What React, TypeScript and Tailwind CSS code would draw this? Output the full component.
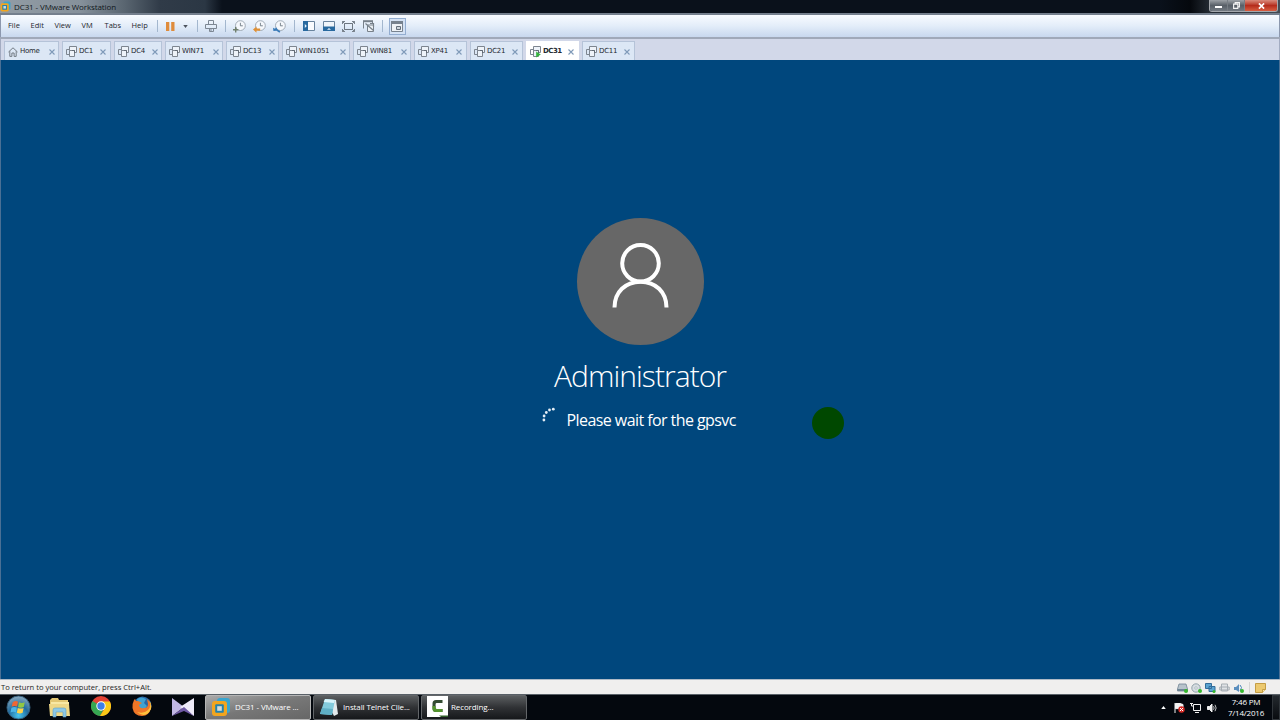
import type { ReactNode } from "react";

type Tab = { name: string; cell: string; label: string; active?: boolean };

const tabs: Tab[] = [
	{ name: "DC1", cell: "w-[52px]", label: "w-[21px]" },
	{ name: "DC4", cell: "w-[51px]", label: "w-[21px]" },
	{ name: "WIN71", cell: "w-[61px]", label: "w-[31px]" },
	{ name: "DC13", cell: "w-[56px]", label: "w-[26px]" },
	{ name: "WIN1051", cell: "w-[71px]", label: "w-[41px]" },
	{ name: "WIN81", cell: "w-[61px]", label: "w-[31px]" },
	{ name: "XP41", cell: "w-[56px]", label: "w-[25px]" },
	{ name: "DC21", cell: "w-[56px]", label: "w-[25px]" },
	{ name: "DC31", cell: "w-[56px]", label: "w-[25px]", active: true },
	{ name: "DC11", cell: "w-[56px]", label: "w-[25px]" },
];

const menus = [
	{ name: "File", w: "w-[22.5px]" },
	{ name: "Edit", w: "w-[24px]" },
	{ name: "View", w: "w-[27px]" },
	{ name: "VM", w: "w-[23px]" },
	{ name: "Tabs", w: "w-[27px]" },
	{ name: "Help", w: "w-[25px]" },
];

function VmLogo({ className = "" }: { className?: string }) {
	return (
		<svg viewBox="0 0 20 20" className={className}>
			<rect x="6" y="1" width="13" height="15" rx="3" fill="#3aa5ce" />
			<rect x="1" y="4" width="15" height="15" rx="3" fill="#f2a51e" />
			<rect x="4.2" y="7.2" width="8.6" height="8.6" rx="1" fill="#2383ad" />
			<rect x="6.2" y="9.2" width="4.6" height="4.6" fill="#d8dcd8" />
		</svg>
	);
}

function VmIcon({ active = false }: { active?: boolean }) {
	return (
		<svg viewBox="0 0 12 12" className="h-3 w-3 shrink-0" fill="none" stroke="#7d858f">
			<path d="M3.5 8.5h-3v-5h3" />
			<path d="M3.5.5h7v6h-7z" fill="#eef3f9" />
			<path d="M3.5 4.5h5v6h-5z" fill="#eef3f9" />
			<path d="M6 4.5h2.5V7" stroke="#626a74" />
			{active && <path d="M6.2 5.6v6l4.6-3z" fill="#35b33c" stroke="none" />}
		</svg>
	);
}

function CloseX() {
	return (
		<svg viewBox="0 0 6 6" className="h-1.5 w-1.5 shrink-0" stroke="#7f9ab8" strokeWidth="1.1">
			<path d="M.5.5l5 5M5.5.5l-5 5" />
		</svg>
	);
}

function Separator() {
	return <div className="h-3 w-px shrink-0 bg-[#a3b7ce]" />;
}

function Cell({ children, className }: { children: ReactNode; className: string }) {
	return <div className={`flex shrink-0 items-center justify-center ${className}`}>{children}</div>;
}

function Clock({ children }: { children: ReactNode }) {
	return (
		<svg viewBox="0 0 13 13" className="h-[13px] w-[13px] shrink-0" fill="none">
			<circle cx="7.4" cy="5.6" r="4.9" fill="#f5f8fc" stroke="#9aa4af" strokeWidth=".9" />
			<path d="M7.4 2.8v3h2.4" stroke="#6f7a85" strokeWidth=".9" />
			{children}
		</svg>
	);
}

function Toolbar() {
	return (
		<div className="flex h-[22px] shrink-0 items-center border-x border-[#8c98ae] bg-linear-to-b from-[#f8fbff] via-[#e3edf9] to-[#c8d8ee] pl-[7px] font-['Open_Sans',sans-serif] text-[7.5px] text-[#25282e]">
			{menus.map((m) => (
				<span key={m.name} className={`shrink-0 whitespace-nowrap ${m.w}`}>
					{m.name}
				</span>
			))}
			<Separator />
			<Cell className="w-[26px]">
				<svg viewBox="0 0 9 9" className="h-[9px] w-[9px]">
					<path d="M0 0h3.3v9H0zM5.2 0h3.3v9H5.2z" fill="#df8c3c" />
				</svg>
			</Cell>
			<svg viewBox="0 0 6 4" className="-ml-px h-[3px] w-[5px] shrink-0">
				<path d="M0 0h6L3 4z" fill="#4c535d" />
			</svg>
			<div className="w-[9px]" />
			<Separator />
			<Cell className="w-[27px]">
				<svg viewBox="0 0 12 12" className="h-3 w-3" fill="none" stroke="#7c8793" strokeWidth="1">
					<path d="M3.5 4.5v-4h5v4M.5 4.5h11v4H.5zM6 8.5V11M4.5 8.5h4v3h-4z" />
				</svg>
			</Cell>
			<Separator />
			<Cell className="w-[28px]">
				<Clock>
					<path d="M0 9.7h5.4M2.7 7v5.4" stroke="#71806e" strokeWidth="1.4" />
				</Clock>
			</Cell>
			<Cell className="w-[12px]">
				<Clock>
					<path d="M0 9.5l3.5-3v2h3.7v2.2H3.5v2z" fill="#e09035" />
				</Clock>
			</Cell>
			<Cell className="w-[28px]">
				<Clock>
					<path d="M0 7.8l2 1 1.2-1.6 1.4 2.3 2.8 1.7-1 1.5-2.9-1.9L.4 11z" fill="#397bb9" />
				</Clock>
			</Cell>
			<Separator />
			<Cell className="w-[28px]">
				<svg viewBox="0 0 12 10" className="h-[10px] w-3">
					<path d="M.5.5h11v9H.5z" fill="#f9fbfe" stroke="#69839d" />
					<path d="M0 0h5v10H0z" fill="#28699f" />
					<path d="M1.8 3l2 2-2 2z" fill="#e8f5ff" />
				</svg>
			</Cell>
			<Cell className="w-[12px]">
				<svg viewBox="0 0 12 10" className="h-[10px] w-3 shrink-0">
					<path d="M.5.5h11v9H.5z" fill="#f0f5fa" stroke="#69839d" />
					<path d="M0 5.5h12V10H0z" fill="#28699f" />
					<path d="M4 8.8l2-1.7 2 1.7z" fill="#e8f5ff" />
				</svg>
			</Cell>
			<Cell className="w-[28px]">
				<svg viewBox="0 0 13 11" className="h-[11px] w-[13px]" fill="none" stroke="#6d7680">
					<path d="M2.5 2.5h8v6h-8z" />
					<path d="M.5 3V.5H3M10 .5h2.5V3M12.5 8v2.5H10M3 10.5H.5V8M.5.5l2 2M12.5.5l-2 2M.5 10.5l2-2M12.5 10.5l-2-2" strokeWidth=".9" />
				</svg>
			</Cell>
			<Cell className="w-[12px]">
				<svg viewBox="0 0 12 12" className="h-3 w-3 shrink-0" fill="none" stroke="#78818a">
					<path d="M.5 8.5V1.5h9v2" />
					<path d="M0 1.2h10" strokeWidth="2" />
					<path d="M4.5 5h6v6.5h-6z" fill="#eef2f6" />
					<path d="M2.5 3.5l8 7M7 3.5h3.5V7" strokeWidth="1.2" />
				</svg>
			</Cell>
			<div className="w-[7px]" />
			<Separator />
			<div className="w-[6px]" />
			<div className="flex h-[17px] w-[17px] shrink-0 items-center justify-center border border-[#93add0] bg-[#d4e2f4]">
				<svg viewBox="0 0 12 11" className="h-[11px] w-3 shrink-0">
					<path d="M.5.5h11v10H.5z" fill="#eef2f6" stroke="#78838f" />
					<path d="M0 0h12v3H0z" fill="#77828e" />
					<path d="M5.5 5.5h4v3h-4z" fill="#cfd6dd" stroke="#65707c" />
				</svg>
			</div>
		</div>
	);
}

function TabBar() {
	return (
		<div className="flex h-[21px] shrink-0 items-end border-x border-[#a3acc2] bg-[#d2d8e9] pl-[3px] font-['DejaVu_Sans',sans-serif] text-[7px] text-[#24292f]">
			<div className="w-[58px] shrink-0">
				<div className="flex h-[19px] w-[55px] items-center border border-b-0 border-[#b5c3d8] bg-[#dce7f5] pt-px pl-[3px]">
					<svg viewBox="0 0 10 10" className="h-[10px] w-[10px] shrink-0" fill="none" stroke="#737b84">
						<path d="M.5 5L5 .8 9.5 5M1.8 4.2v5.2h2.1V6h2.2v3.4h2.1V4.2" />
					</svg>
					<span className="ml-0.5 w-[29px] whitespace-nowrap tracking-[-0.3px]">Home</span>
					<CloseX />
				</div>
			</div>
			{tabs.map((t) => (
				<div key={t.name} className={`shrink-0 pr-[3px] ${t.cell}`}>
					<div
						className={`flex h-[19px] items-center border border-b-0 pt-px pl-[3px] ${
							t.active ? "border-white bg-white font-bold" : "border-[#b5c3d8] bg-[#dce7f5]"
						}`}
					>
						<VmIcon active={t.active} />
						<span className={`ml-px shrink-0 whitespace-nowrap ${t.label}`}>
							<span className={t.active ? "tracking-[-0.5px]" : "tracking-[-0.25px]"}>{t.name}</span>
						</span>
						<CloseX />
					</div>
				</div>
			))}
		</div>
	);
}

function TitleBar() {
	return (
		<div className="flex h-[13px] shrink-0 justify-between bg-[linear-gradient(90deg,#929ca5_0px,#86919b_80px,#596570_125px,#303b48_160px,#2b3744_205px,#0a111b_222px,#0a111b_1160px,#05080d_1190px,#242b33_1210px,#454c54_1280px)]">
			<div className="flex items-center">
				<VmLogo className="h-[11px] w-[11px]" />
				<span className="ml-[3px] whitespace-nowrap font-['Open_Sans',sans-serif] text-[8px] leading-3 tracking-[-0.1px] text-[#111820]">
					DC31 - VMware Workstation
				</span>
			</div>
			<div className="mr-0.5 flex h-[12px] w-[69px] overflow-hidden rounded-b-[3px] border border-t-0 border-[#a4a8ad]">
				<div className="flex w-[18px] items-center justify-center border-r border-[#777d84] bg-linear-to-b from-[#9da2a7] via-[#596068] to-[#737a82]">
					<div className="mt-[3px] h-[2px] w-[7px] bg-white" />
				</div>
				<div className="flex w-[17px] items-center justify-center border-r border-[#777d84] bg-linear-to-b from-[#9da2a7] via-[#596068] to-[#737a82]">
					<svg viewBox="0 0 8 8" className="h-[7px] w-[7px]" fill="none" stroke="#f5f5f5" strokeWidth="1.3">
						<path d="M2.5 2V.7h4.8v4.8H6M.7 2.5h4.8v4.8H.7z" />
					</svg>
				</div>
				<div className="flex flex-1 items-center justify-center bg-linear-to-b from-[#d98a7c] via-[#b52c1c] to-[#d95d40]">
					<svg viewBox="0 0 8 7" className="h-[6px] w-[7px]" stroke="white" strokeWidth="2">
						<path d="M1 .5l6 6M7 .5l-6 6" />
					</svg>
				</div>
			</div>
		</div>
	);
}

function GuestScreen() {
	return (
		<div className="relative flex h-[619px] shrink-0 flex-col items-center border-x border-[#4a7095] bg-[#00477d] pt-[157px] text-white">
			<svg viewBox="0 0 128 128" className="h-32 w-32 shrink-0" fill="none">
				<circle cx="64.5" cy="64.5" r="63.5" fill="#676767" />
				<circle cx="64.5" cy="46.3" r="18.3" stroke="white" strokeWidth="4" />
				<path d="M38.5 90.5C38.5 75 49.5 64.7 64.5 64.7S90.5 75 90.5 90.5" stroke="white" strokeWidth="4" />
			</svg>
			<div className="mt-[11px] whitespace-nowrap font-['Open_Sans',sans-serif] text-[30px] leading-10 font-light tracking-[-0.95px]">
				Administrator
			</div>
			<div className="mt-[12px] flex h-6 w-[199px] items-center">
				<svg viewBox="0 0 24 24" className="-mt-1 h-6 w-6 shrink-0" fill="#e3edf5">
					<circle cx="2.9" cy="14" r="1.4" />
					<circle cx="3.1" cy="10" r="1.4" />
					<circle cx="5.3" cy="6.5" r="1.4" />
					<circle cx="8.5" cy="4" r="1.4" />
					<circle cx="12.3" cy="3.2" r="1.4" />
				</svg>
				<span className="ml-[2px] whitespace-nowrap font-['Open_Sans',sans-serif] text-[16px] tracking-[-0.57px]">
					Please wait for the gpsvc
				</span>
			</div>
			<div className="absolute top-[347px] left-[811px] h-8 w-8 rounded-full bg-[#004800]" />
		</div>
	);
}

function StatusBar() {
	return (
		<div className="flex h-[15px] shrink-0 items-center justify-between border-t border-[#aebac6] bg-[#f0efee] pt-px pr-[14px] font-['Open_Sans',sans-serif] text-[7.6px] text-[#252525]">
			<span className="ml-px whitespace-nowrap">To return to your computer, press Ctrl+Alt.</span>
			<div className="flex items-center gap-[3px]">
				<svg viewBox="0 0 11 10" className="h-[10px] w-[11px]">
					<path d="M2 1h7l1.5 5v2H.5V6z" fill="#b8c3cb" stroke="#718494" strokeWidth=".8" />
					<path d="M.5 6h10v2H.5z" fill="#6d8595" />
					<circle cx="9" cy="8" r="2" fill="#36b82e" />
				</svg>
				<svg viewBox="0 0 11 10" className="h-[10px] w-[11px]">
					<circle cx="5" cy="5" r="4.2" fill="#d6dde1" stroke="#93a1aa" />
					<circle cx="5" cy="5" r="1.2" fill="white" stroke="#899aa5" strokeWidth=".6" />
					<circle cx="9" cy="8" r="2" fill="#36b82e" />
				</svg>
				<svg viewBox="0 0 11 10" className="h-[10px] w-[11px]">
					<path d="M.5.5h6v5h-6zM4 3.5h6v5H4z" fill="#5ba4d1" stroke="#336c9a" />
					<circle cx="9" cy="8.5" r="1.5" fill="#36b82e" />
				</svg>
				<svg viewBox="0 0 11 10" className="h-[10px] w-[11px]" stroke="#a6adb3">
					<path d="M2.5 1h6v7h-6zM.8 4h9.4v3H.8z" fill="#dfe2e5" />
				</svg>
				<svg viewBox="0 0 11 10" className="h-[10px] w-[11px]">
					<path d="M1 4h2l3-3v8L3 7H1z" fill="#5b8fbe" />
					<path d="M7 2q3 2 0 6" fill="none" stroke="#4b86b9" />
					<circle cx="9" cy="8" r="2" fill="#36b82e" />
				</svg>
				<div className="ml-[2px] h-[11px] w-px bg-[#d5d5d5]" />
				<svg viewBox="0 0 11 10" className="ml-[2px] h-[10px] w-[11px]">
					<path d="M.5.5h10v6l-3 3h-7z" fill="#ecc96f" stroke="#c49d45" />
					<path d="M7.5 9.5v-3h3" fill="#fbe8ac" stroke="#c49d45" />
				</svg>
			</div>
		</div>
	);
}

function TaskButton({ icon, label, active = false }: { icon: ReactNode; label: string; active?: boolean }) {
	return (
		<div
			className={`mr-[2px] flex h-[25px] w-[106px] shrink-0 items-center rounded-[2px] border pb-[2px] pl-[5px] ${
				active
					? "border-[#b5b5b5] bg-linear-to-br from-[#aaa] via-[#777] to-[#676767]"
					: "border-[#636669] bg-linear-to-b from-[#5b5e60] via-[#303235] to-[#16181b]"
			}`}
		>
			<div className="flex w-[24px] shrink-0 items-center">{icon}</div>
			<span className="whitespace-nowrap tracking-[-0.12px]">{label}</span>
		</div>
	);
}

function Taskbar() {
	return (
		<div className="flex h-[26px] shrink-0 items-center border-t border-[#596067] bg-[#04080e] font-['Open_Sans',sans-serif] text-[8px] text-white">
			<Cell className="w-[36px] pb-px">
				<svg viewBox="0 0 26 26" className="h-[25px] w-[25px] shrink-0">
					<defs>
						<radialGradient id="orb" cx=".5" cy=".85" r=".85">
							<stop stopColor="#48c6ef" />
							<stop offset=".5" stopColor="#226c9f" />
							<stop offset="1" stopColor="#8fabbe" />
						</radialGradient>
					</defs>
					<circle cx="13" cy="13" r="12" fill="url(#orb)" stroke="#315b78" />
					<path d="M7 7.5q3-2 5.5-.5l-1 5q-3-1.2-5.7.2z" fill="#ef6734" />
					<path d="M13.5 7.5q3 1.5 6 0l-1 5q-3 1.3-6 0z" fill="#91c744" />
					<path d="M5.6 13.2q3-1.5 5.7-.2l-1 5q-2.5-1.4-5.6.2z" fill="#4cb5e8" />
					<path d="M12.3 13.5q3 1.3 6 0l-1 5q-3 1.5-6 0z" fill="#ffd248" />
				</svg>
			</Cell>
			<Cell className="w-[46px]">
				<svg viewBox="0 0 23 22" className="h-[22px] w-[23px]">
					<path d="M2 3l2-2h6l1 2h9v15H2z" fill="#e3c773" />
					<path d="M3 5h18v14H3z" fill="#f8e8a4" />
					<path d="M1 7h20l1 12H2z" fill="#eed787" />
					<path d="M5 20v-7q0-2 2-2h9q2 0 2 2v7h-3v-5H8v5z" fill="#8dc8e5" stroke="#5b9fc6" strokeWidth=".6" />
				</svg>
			</Cell>
			<Cell className="w-[37px] pb-[3px]">
				<svg viewBox="0 0 20 20" className="h-[20px] w-[20px]">
					<circle cx="10" cy="10" r="10" fill="#e44335" />
					<path d="M1.3 5A10 10 0 0 0 9 20l4.5-8z" fill="#36a752" />
					<path d="M10 5.5h8.9A10 10 0 0 1 9 20l4.9-7.8z" fill="#fbc917" />
					<circle cx="10" cy="10" r="4.7" fill="white" />
					<circle cx="10" cy="10" r="3.7" fill="#3e7ee8" />
				</svg>
			</Cell>
			<Cell className="w-[45px] pb-[3px]">
				<svg viewBox="0 0 20 20" className="h-[20px] w-[20px]">
					<circle cx="10.5" cy="9.5" r="9" fill="#2868a7" />
					<path d="M5 3Q9 0 14 3l-2 4 3 3-3 4-5-2z" fill="#41a2d1" />
					<path d="M2 4l1-1 1 2q3-.2 4 1l2 1-3 2q1 4 5 3 4 0 4-4l-1-5q5 4 4 9-2 8-9 8Q2 20 .5 12 0 8 2 4" fill="#ef7627" />
					<path d="M17 4q3 6-1 10-4 4-11 2 9 7 14-3 1-5-2-9" fill="#ffc23c" />
				</svg>
			</Cell>
			<Cell className="w-[37px] pb-[2px]">
				<svg viewBox="0 0 22 20" className="h-[20px] w-[22px]">
					<path d="M0 1l12 9L0 19z" fill="#c1b7e4" />
					<path d="M22 1v18L8 10z" fill="#eeebf9" />
					<path d="M0 19l12-9 10 9-10-5z" fill="#6e58a3" />
				</svg>
			</Cell>
			<div className="w-[4px]" />
			<TaskButton active icon={<VmLogo className="h-5 w-5" />} label="DC31 - VMware ..." />
			<TaskButton
				icon={
					<svg viewBox="0 0 20 20" className="h-5 w-5">
						<path d="M6 2l11 1 2 14-4 2z" fill="#e3eaec" />
						<path d="M6 2l10 1-3 15-12-1z" fill="#83cbdc" />
						<path d="M6 2l10 1-1 3L4.600 5z" fill="#d8f5fc" />
						<path d="M3 11l11 1-1 6-12-1z" fill="#5fb0c6" />
					</svg>
				}
				label="Install Telnet Clie..."
			/>
			<TaskButton
				icon={
					<svg viewBox="0 0 21 21" className="h-[21px] w-[21px]">
						<path d="M0 0h21v21H0z" fill="white" />
						<path d="M15.5 4H9Q5.500 4 5.500 7.500v5Q5.500 16 9 16h6.500v-3H9.800q-1.200 0-1.200-1.200V8.200Q8.600 7 9.800 7h5.700z" fill="#344c32" />
						<path d="M5.500 10v2.500Q5.500 16 9 16h6.500v-3H9.800q-1.200 0-1.200-1.200V10z" fill="#54952e" />
						<path d="M12 19.500h9V21h-7z" fill="#315e2b" />
					</svg>
				}
				label="Recording..."
			/>
			<div className="flex-1" />
			<svg viewBox="0 0 6 4" className="h-[3px] w-[5px]">
				<path d="M0 4h6L3 0z" fill="white" />
			</svg>
			<svg viewBox="0 0 11 11" className="ml-[8px] h-[11px] w-[11px]">
				<path d="M1 1v10M1.500 1.500H6l3 1v4.800l-3-.7H1.500z" fill="#f3f3f3" stroke="#f3f3f3" />
				<circle cx="7.500" cy="7.500" r="3.200" fill="#d62c27" />
				<path d="M6 6l3 3M9 6L6 9" stroke="white" />
			</svg>
			<svg viewBox="0 0 11 11" className="ml-[5px] h-[11px] w-[11px]" fill="none" stroke="#f0f0f0">
				<path d="M3.500 2.500h7v6h-7zM5 10.500h4M1.500 1v3h2M0 1.500h3" />
			</svg>
			<svg viewBox="0 0 10 10" className="ml-[6px] h-[10px] w-[10px]" fill="none" stroke="#f0f0f0">
				<path d="M.5 3.500h2L5 1v8L2.500 6.500h-2z" fill="#f0f0f0" />
				<path d="M6.500 3.200q1.300 1.800 0 3.600M8 1.800q2.300 3.200 0 6.400" strokeWidth=".8" />
			</svg>
			<div className="ml-[8px] w-[42px] pb-[2px] text-center text-[8px] leading-[11px] tracking-[-0.2px] whitespace-nowrap">
				<div>7:46 PM</div>
				<div>7/14/2016</div>
			</div>
			<div className="ml-[5px] h-[25px] w-[8px] shrink-0 border border-[#30353a] bg-linear-to-b from-[#24292e] to-[#090c10]" />
		</div>
	);
}

export default function App() {
	return (
		<div className="flex h-[720px] w-[1280px] flex-col overflow-hidden bg-[#f0efee]">
			<TitleBar />
			<div className="h-[2px] shrink-0 bg-[#747f8d]" />
			<Toolbar />
			<div className="h-[2px] shrink-0 bg-[#a0a9b9]" />
			<TabBar />
			<GuestScreen />
			<StatusBar />
			<Taskbar />
		</div>
	);
}
